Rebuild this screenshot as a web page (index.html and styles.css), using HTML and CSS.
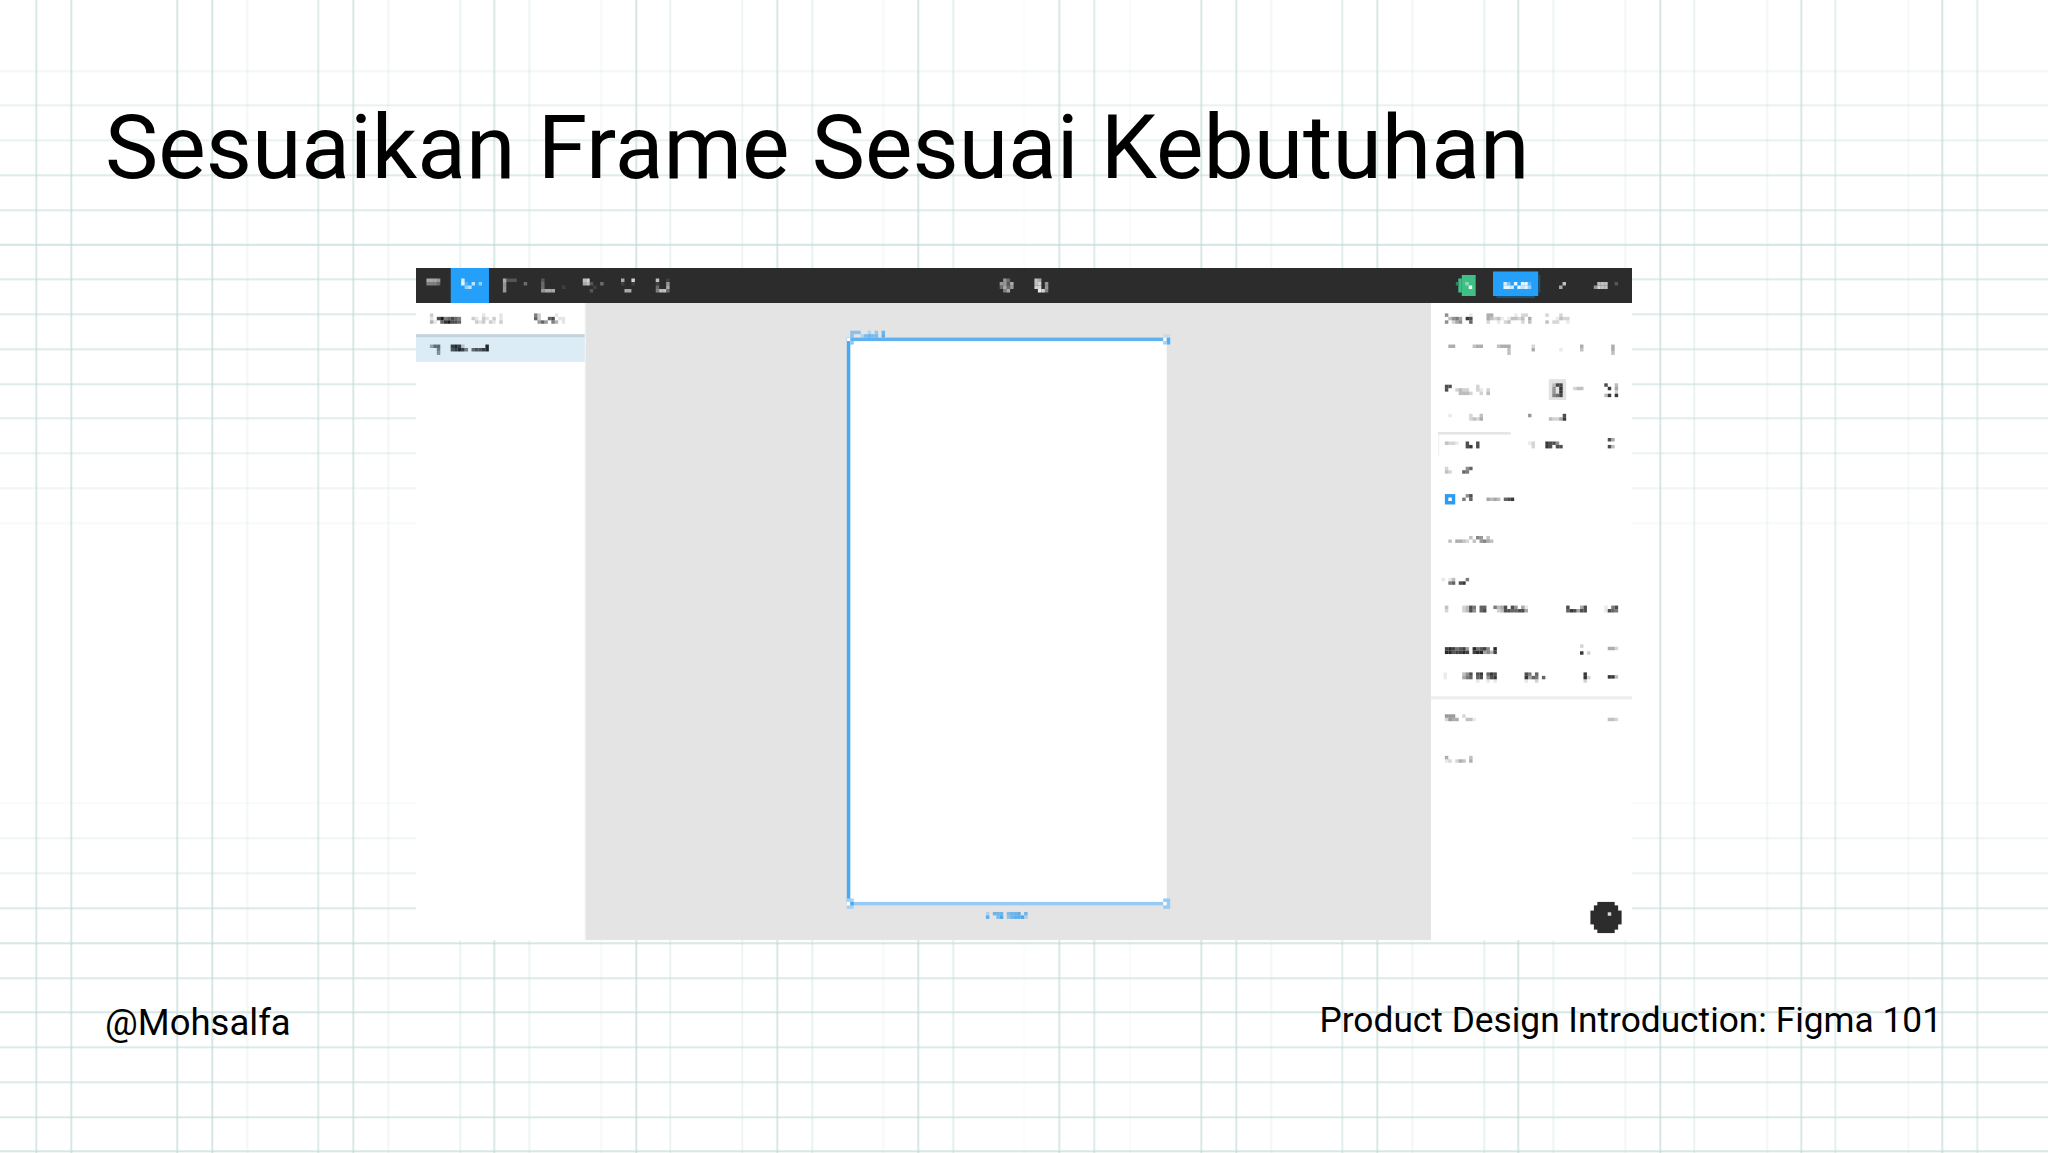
FILE: index.html
```html
<!DOCTYPE html>
<html lang="id">
<head>
<meta charset="utf-8">
<title>Sesuaikan Frame Sesuai Kebutuhan</title>
<link rel="stylesheet" href="styles.css">
</head>
<body>
<main class="slide">
  <svg class="grid-paper" viewBox="0 0 2048 1153" aria-hidden="true"></svg>
  <h1 class="title">Sesuaikan Frame Sesuai Kebutuhan</h1>
  <section class="editor" aria-label="Figma">
    <div class="toolbar"><svg class="pixels" data-map="toolbar" viewBox="0 0 350 10" preserveAspectRatio="none"></svg></div>
    <div class="workspace">
      <aside class="layers"><svg class="pixels" data-map="layers" viewBox="0 10 49 184" preserveAspectRatio="none"></svg></aside>
      <div class="canvas"><svg class="pixels" data-map="canvas" viewBox="49 10 243 184" preserveAspectRatio="none"></svg></div>
      <aside class="inspector"><svg class="pixels" data-map="inspector" viewBox="0 10 58 184" preserveAspectRatio="none"></svg></aside>
    </div>
  </section>
  <footer class="footer">
    <span class="handle">@Mohsalfa</span>
    <span class="course">Product Design Introduction: Figma 101</span>
  </footer>
</main>
<script src="app.js"></script>
</body>
</html>
```
FILE: styles.css
```css
body { margin: 0; background: #fff; color: #000; font-family: Roboto, sans-serif; }
.slide { position: relative; display: flex; flex-direction: column; box-sizing: border-box; width: 2048px; height: 1153px; padding: 96px 106px 0 105px; overflow: hidden; background: #fefffe; }
.grid-paper { position: absolute; inset: 0; width: 100%; height: 100%; }
.title { position: relative; margin: 0; height: 172px; font-size: 89.6px; line-height: 104px; font-weight: 400; white-space: nowrap; }
.editor { position: relative; display: flex; flex-direction: column; width: 1216px; height: 672px; margin-left: 310.5px; background: #fff; }
.toolbar { height: 35px; background: #2c2c2c; }
.workspace { display: grid; grid-template-columns: 170px 1fr 201px; grid-template-rows: 637px; height: 637px; }
.layers, .inspector { background: #fff; }
.canvas { background: #e4e4e4; }
.pixels { display: block; width: 100%; height: 100%; }
.footer { position: relative; display: flex; justify-content: space-between; align-items: flex-start; padding-top: 59px; font-size: 35.3px; line-height: 42px; white-space: nowrap; }
.handle { padding-top: 3px; font-size: 36.5px; }
```
FILE: app.js
```js
const NS = "http://www.w3.org/2000/svg";
function rect(svg, x, y, w, h, fill, opacity) {
  const r = document.createElementNS(NS, "rect");
  const a = { x, y, width: w, height: h, fill, "fill-opacity": opacity ?? 1 };
  for (const k in a) r.setAttribute(k, a[k]);
  svg.appendChild(r);
}

// Ruled paper: [position, strength]
const paper = document.querySelector(".grid-paper");
const teal = "#c0dad9";
[[36,.6],[71,.65],[177,.65],[212,.65],[247,.18],[318,.5],[353,.6],[388,.2],[460,.3],[494,.6],[529,.25],[601,.13],[636,.65],[670,.3],[742,.25],[777,.6],[812,.35],[883,.15],[918,.65],[953,.4],[1024,.06],[1059,.6],[1094,.5],[1130,.1],[1201,.6],[1236,.6],[1271,.2],[1342,.45],[1377,.6],[1412,.2],[1484,.35],[1518,.65],[1553,.25],[1625,.18],[1660,.65],[1694,.3],[1767,.2],[1801,.6],[1835,.4],[1908,.15],[1942,.65],[1977,.45]]
  .forEach(([x, o]) => rect(paper, x - .7, 0, 2, 1153, teal, o));
[[71,.2],[105,.35],[140,.35],[175,.5],[210,.5],[244.5,.7],[279,.5],[314,.5],[349,.5],[384,.5],[418,.45],[453,.35],[488,.22],[523,.13],[803,.1],[838,.25],[873,.3],[908,.55],[943,.65],[978,.55],[1012,.65],[1047,.55],[1082,.55],[1117,.6],[1151,.65]]
  .forEach(([y, o]) => rect(paper, 0, y - .7, 2048, 2, teal, o));

// Solid blocks: [x, y, w, h, colour]
const blocks = {
  toolbar: [[10,0,11,10,"#24a0fa"],
    [301,2,4,6,"#3fbf86"],[300,3,1,4,"#3fbf86"],[299.3,4,.7,1,"#2f7f60"],[302,7,2,1,"#3fbf86"],
    [310,1,13,7,"#24a0fa"],[311,8,11,.6,"#1f5077"],[323,2,.6,5,"#1f5077"]],
  layers: [[0,19,49,1,"#c5d3dc"],[0,20,49,7,"#dcecf6"],[48.6,10,.4,184,"#f1f1f1"]],
  canvas: [[125,21,91,162,"#fff"],[124,20,1,163,"#4aa9f3"],[124,20,92,1,"#60b1f0"],[124,183,92,1,"#97cbf5"],
    [124,20,1,1,"#fff"],[125,21,1,1,"#8ac5f4"],[215,19,2,1,"#cbdbe2"],[215,20,1,1,"#fff"],[216,20,1,2,"#57aef2"],[215,21,1,1,"#9fcff2"],
    [124,182,2,3,"#a4d1f5"],[124,183,1,1,"#fff"],[125,183,1,1,"#4aa9f3"],[215,182,2,3,"#97cbf5"],[215,183,1,1,"#fff"]],
  inspector: [[34,32,5,6,"#e2e2e2"],[2,47.3,21,.7,"#e3e3e3"],[2,48,.4,6,"#f3f3f3"],[4,65.2,3,3,"#2c9bf0"],[5,66.2,1,1,"#fff"],[0,123.6,58,.9,"#eee"],
    [47,184,7,7,"#2c2c2c"],[48,183,5,9,"#2c2c2c"],[46,185.5,9,4,"#2c2c2c"],[51,186,1,1,"#d8d8d8"]]
};

// Shaded cells: [x, y, colour, rows]; digits run from faint 1 to solid 9
const marks = {
  toolbar: [
    [3,3,"#fff",["6665","4443"]],
    [13,3,"#fff",["8...","92.7",".57."]],[18,4,"#fff",["5"]],
    [25,3,"#fff",["6222","5...","5...","5..."]],[31,4,"#fff",["3"]],
    [36,3,"#fff",["2...","3...","3...","5666"]],[42,5,"#fff",["1"]],
    [48,3,"#fff",["78..","672.","...1","..2."]],[53,4,"#fff",["3"]],
    [59,3,"#fff",["6..8","1..1","....",".66."]],
    [69,3,"#fff",["7..1","1..5","3..6","4773"]],
    [168,3,"#fff",[".53.","5526","3635",".46."]],
    [178,3,"#fff",["76..","78.5","88.5",".984"]],
    [302,4,"#fff",["4..",".9."]],
    [313,4,"#fff",["84.9.992","998.9795"]],
    [329,4,"#fff",[".7","6."]],[339,4,"#fff",[".777.","5877."]],[345,4,"#fff",["2"]]],
  layers: [
    [4,13,"#000",["2........","1.7956765","31.689776"]],
    [16,13,"#000",["...1....1","21.21.2.1",".212.21.2"]],
    [34,13,"#000",["52....1..","62..67.11",".464.53.1"]],
    [4,22,"#26323a",["477","..6","..5"]],
    [10,22,"#0b1318",["8982......9","78985.67789"]]],
  canvas: [
    [125,18,"#4aa9f3",["666..3.5.8","6..37877.9"]],
    [164,185.9,"#3b9eea",["3.777.6778.7","8..69.578893"]]],
  inspector: [
    [4,13,"#222",["5......1",".3564.98","5.245..7"]],
    [16,13,"#333",["44......1.22.","43231.13323.4","2..1.23...2.3"]],
    [33,13,"#333",["2...2..","...1322","3.22..1"]],
    [5,22,"#333",["44"]],[12,22,"#333",["344"]],[19,22,"#333",["3444","...3","...3"]],
    [29,22,"#333",["2","4"]],[37,23,"#333",["1"]],[43,22,"#333",["4","3"]],[52,22,"#333",["4","4","3"]],
    [4,33.6,"#222",["88.......2...","8..2322..21.2","....3332..2.3"]],
    [35,33.2,"#222",["288","4.9","4.9","568"]],[41,34.2,"#333",["233"]],
    [50,33.2,"#222",["8..3",".9.4","...2","39.9"]],
    [5,42,"#333",["1"]],[11,42,"#333",["2..3","2324"]],[28,42,"#333",["5"]],[34,42,"#222",["....8","32249"]],
    [4,50,"#333",["3221"]],[10,50,"#222",["8..8","89.8"]],[28,50,"#333",["12",".2"]],[33,50,"#222",["9885","98.88"]],
    [51,49,"#222",["84","..","83"]],
    [4,57.3,"#333",["2..","32."]],[9,57.3,"#222",[".57","76."]],
    [9,65.2,"#222",[".58","6.7"]],[16,66.2,"#222",["4343.789"]],
    [5,77.3,"#333",["......3.65.3.","3.4432.3.5643"]],
    [3,89.4,"#222",["1.13...6","..67.89."]],
    [4,97.4,"#333",["3","2"]],[9,97.4,"#222",["2386.77","2385.78"]],[18,97.4,"#222",["6348.85.41",".238877884"]],
    [39,97.4,"#222",["8...48","798488"]],[50,97.4,"#222",["1.68","1876"]],
    [4,109.4,"#111",["8986784.96785.9","9978898.8994538"]],
    [43,108.6,"#222",["2..",". .","9.2"]],[51,109.3,"#333",["442"]],
    [3.6,116.7,"#999",["2","2"]],[9,116.7,"#222",["358.89.798","467.78.589","....1..1.1"]],[27,116.7,"#222",["86.7","9476.7","1..2"]],
    [44,116.7,"#222",["9.","92","2."]],[51,117.5,"#222",["993"]],
    [4,128.8,"#333",["555..2...","2544..331"]],[51,129.8,"#333",["332"]],
    [4,140.8,"#333",["4......3","12.243.4"]]]
};

for (const svg of document.querySelectorAll(".pixels")) {
  const key = svg.dataset.map;
  for (const [x, y, w, h, c] of blocks[key]) rect(svg, x, y, w, h, c);
  for (const [x, y, c, rows] of marks[key])
    rows.forEach((row, j) => [...row].forEach((d, i) => {
      if (d > "0" && d <= "9") rect(svg, x + i, y + j, 1, 1, c, d / 10);
    }));
}
```
